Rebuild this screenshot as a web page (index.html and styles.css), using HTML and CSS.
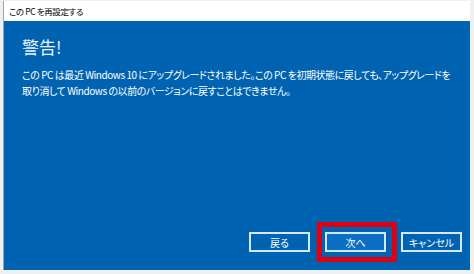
FILE: index.html
```html
<!DOCTYPE html>
<html lang="ja">
<head>
    <meta charset="UTF-8">
    <title>この PC を再設定する</title>
    <link rel="stylesheet" href="styles.css">
</head>
<body>
    <div class="window">
        <div class="titlebar">この PC を再設定する</div>
        <div class="content">
            <h1>警告!</h1>
            <div class="message">
                <div class="line">この PC は最近 Windows 10 にアップグレードされました。この PC を初期状態に戻しても、アップグレードを</div>
                <div class="line">取り消して Windows の以前のバージョンに戻すことはできません。</div>
            </div>
            <div class="buttons">
                <button>戻る</button>
                <div class="next-wrap">
                    <button class="next">次へ</button>
                    <div class="highlight"></div>
                </div>
                <button>キャンセル</button>
            </div>
        </div>
    </div>
</body>
</html>
```

FILE: styles.css
```css
* {
    font-family: 'Noto Sans CJK JP', sans-serif;
    box-sizing: border-box;
    font-feature-settings: "palt";
}
body {
    margin: 0;
    background-color: #eef0f2;
    height: 274px;
    overflow: hidden;
}
.window {
    margin: 1px 0 0 3px;
    width: 467px;
    display: flex;
    flex-direction: column;
    border-left: 1px solid #9aa4ae;
}
.titlebar {
    background-color: white;
    height: 20px;
    line-height: 20px;
    padding-left: 5px;
    font-size: 8.5px;
    letter-spacing: -0.4px;
    color: #000;
}
.content {
    background-color: #0063b1;
    height: 249px;
    padding: 0 8px 18px 18px;
    display: flex;
    flex-direction: column;
    color: white;
}
h1 {
    margin: 14px 0 0 0;
    font-size: 17px;
    font-weight: normal;
    line-height: 24px;
    color: #e8f1fa;
}
.message {
    margin-top: 8px;
    font-size: 10px;
    letter-spacing: -0.45px;
}
.line {
    height: 16px;
    line-height: 16px;
    white-space: nowrap;
}
.buttons {
    margin-top: auto;
    display: flex;
    justify-content: flex-end;
    gap: 15px;
}
button {
    width: 61px;
    height: 20px;
    background-color: #0063b1;
    border: 2px solid #d6e7f5;
    color: white;
    font-size: 10px;
    padding: 0;
    display: block;
}
.next {
    background-color: #0a6fc2;
}
.next-wrap {
    position: relative;
    display: flex;
}
.highlight {
    position: absolute;
    left: -8px;
    top: -10px;
    width: 80px;
    height: 40px;
    border: 5px solid #e00012;
}
```
